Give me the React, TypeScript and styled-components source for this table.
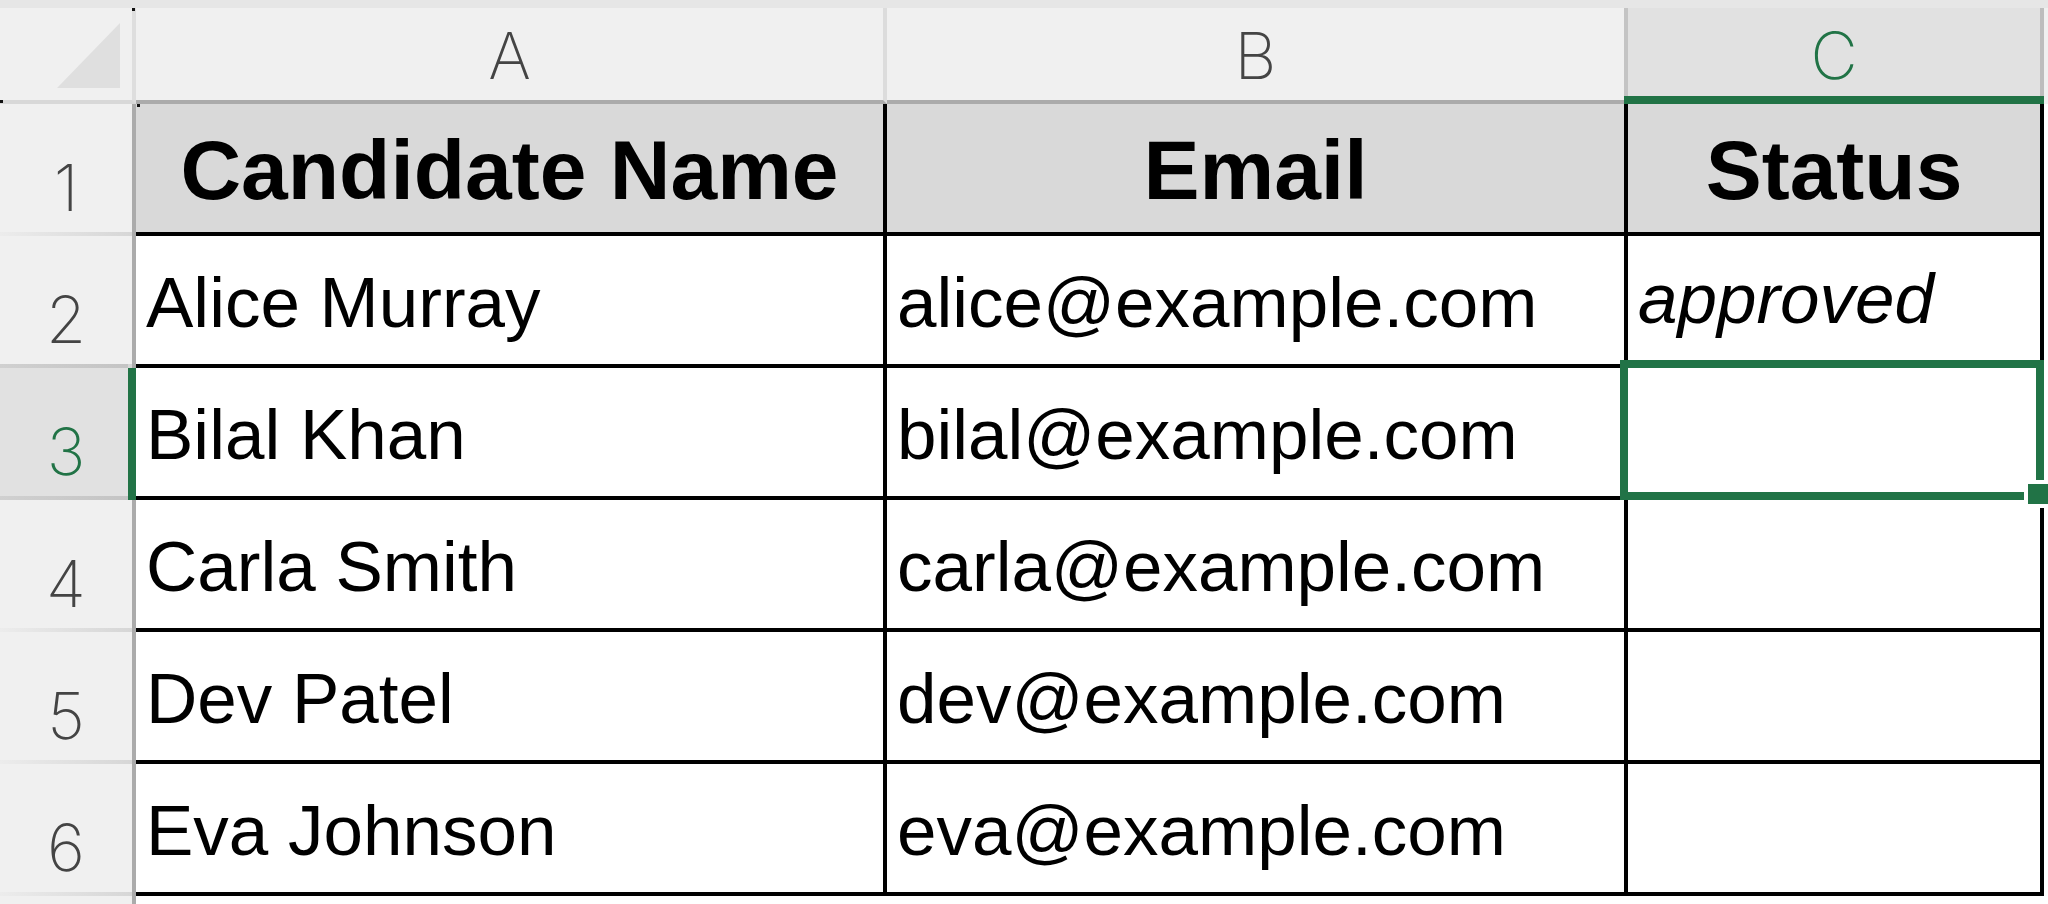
import React from "react";
import styled, { createGlobalStyle, css } from "styled-components";

const GREEN = "#217346";

const GlobalStyle = createGlobalStyle`
  html, body {
    margin: 0;
    padding: 0;
    overflow: hidden;
    background: #ffffff;
  }
  body {
    font-family: "Liberation Sans", Arial, sans-serif;
  }
`;

const Page = styled.div`
  width: 2048px;
  height: 904px;
  overflow: hidden;
  background: #ffffff;
`;

const TopStrip = styled.div`
  height: 8px;
  background: #e6e6e6;
`;

const Sheet = styled.div`
  position: relative;
  display: grid;
  grid-template-columns: 136px 751px 741px 416px 4px;
  grid-template-rows: 96px repeat(6, 132px) 8px;
`;

const Corner = styled.div`
  box-sizing: border-box;
  background: #f0f0f0;
  border-right: 4px solid #dedede;
  border-bottom: 4px solid #d8d8d8;
  display: flex;
  justify-content: flex-end;
  align-items: flex-end;
  padding: 0 12px 12px 0;
`;

const CornerTriangle = styled.div`
  width: 63px;
  height: 65px;
  background: #dfdfdf;
  clip-path: polygon(100% 0, 100% 100%, 0 100%);
`;

const headingFont = css`
  font-family: "Segoe UI", Inter, "Noto Sans", sans-serif;
  font-weight: 200;
  font-size: 65px;
  line-height: 1;
`;

const ColHead = styled.div<{ $selected?: boolean; $sep?: string }>`
  position: relative;
  box-sizing: border-box;
  background: ${(p) => (p.$selected ? "#e1e1e1" : "#f0f0f0")};
  border-right: 4px solid ${(p) => p.$sep ?? "#dcdcdc"};
  border-bottom: 4px solid #ababab;
  display: flex;
  justify-content: center;
  align-items: flex-end;
  padding-bottom: 12px;
  color: ${(p) => (p.$selected ? GREEN : "#444444")};
  ${headingFont};
  ${(p) =>
    p.$selected &&
    css`
      &::after {
        content: "";
        position: absolute;
        left: -4px;
        right: -4px;
        bottom: -4px;
        height: 8px;
        background: ${GREEN};
      }
    `}
`;

const RowHead = styled.div<{ $selected?: boolean }>`
  position: relative;
  box-sizing: border-box;
  background: ${(p) => (p.$selected ? "#e1e1e1" : "#f0f0f0")};
  border-right: ${(p) => (p.$selected ? `8px solid ${GREEN}` : "4px solid #ababab")};
  display: flex;
  justify-content: center;
  align-items: flex-end;
  padding-bottom: 16px;
  padding-left: ${(p) => (p.$selected ? "4px" : "0")};
  color: ${(p) => (p.$selected ? GREEN : "#444444")};
  ${headingFont};
  &::after {
    content: "";
    position: absolute;
    left: 0;
    right: 0;
    bottom: 0;
    height: 4px;
    background: ${(p) =>
      p.$selected
        ? "linear-gradient(to right, #d0d0d0, #c4c4c4)"
        : "linear-gradient(to right, #ececec, #d6d6d6)"};
  }
  ${(p) =>
    p.$selected &&
    css`
      &::before {
        content: "";
        position: absolute;
        left: 0;
        right: 0;
        top: -4px;
        height: 4px;
        background: linear-gradient(to right, #d0d0d0, #c4c4c4);
      }
    `}
`;

const TailHead = styled.div`
  box-sizing: border-box;
  background: #f0f0f0;
  border-right: 4px solid #ababab;
`;

const Cell = styled.div<{
  $head?: boolean;
  $italic?: boolean;
  $lift?: number;
  $selected?: boolean;
}>`
  position: relative;
  box-sizing: border-box;
  background: ${(p) => (p.$head ? "#d9d9d9" : "#ffffff")};
  border-right: 4px solid #000000;
  border-bottom: 4px solid #000000;
  display: flex;
  align-items: flex-end;
  justify-content: ${(p) => (p.$head ? "center" : "flex-start")};
  padding-left: ${(p) => (p.$head ? "0" : "10px")};
  padding-bottom: ${(p) => (p.$head ? 20 : 26 + (p.$lift ?? 0))}px;
  font-family: "Liberation Sans", Arial, sans-serif;
  font-size: ${(p) => (p.$head ? "84px" : "71px")};
  font-weight: ${(p) => (p.$head ? 700 : 400)};
  font-style: ${(p) => (p.$italic ? "italic" : "normal")};
  line-height: 1;
  color: #000000;
  white-space: nowrap;
  ${(p) =>
    p.$selected &&
    css`
      &::after {
        content: "";
        position: absolute;
        top: -8px;
        left: -8px;
        right: -4px;
        bottom: -4px;
        border: 8px solid ${GREEN};
        z-index: 2;
      }
    `}
`;

const FillHandle = styled.span`
  position: absolute;
  right: -8px;
  bottom: -8px;
  width: 20px;
  height: 20px;
  background: ${GREEN};
  box-shadow: 0 0 0 4px #ffffff;
  z-index: 3;
`;

const BlankCell = styled.div<{ $shade?: boolean }>`
  background: ${(p) => (p.$shade ? "#f0f0f0" : "#ffffff")};
`;

const Dot = styled.span<{ $x: number; $y: number }>`
  position: absolute;
  left: ${(p) => p.$x}px;
  top: ${(p) => p.$y}px;
  width: 3px;
  height: 3px;
  background: #111111;
  z-index: 4;
`;

type Row = { name: string; email: string; status?: string };

const rows: Row[] = [
  { name: "Alice Murray", email: "alice@example.com", status: "approved" },
  { name: "Bilal Khan", email: "bilal@example.com" },
  { name: "Carla Smith", email: "carla@example.com" },
  { name: "Dev Patel", email: "dev@example.com" },
  { name: "Eva Johnson", email: "eva@example.com" },
];

export default function App() {
  return (
    <>
      <GlobalStyle />
      <Page>
        <TopStrip />
        <Sheet>
          <Corner>
            <CornerTriangle />
          </Corner>
          <ColHead $sep="#dcdcdc">A</ColHead>
          <ColHead $sep="#c4c4c4">B</ColHead>
          <ColHead $selected $sep="#bdbdbd">C</ColHead>
          <BlankCell $shade />

          <RowHead>1</RowHead>
          <Cell $head>Candidate Name</Cell>
          <Cell $head>Email</Cell>
          <Cell $head>Status</Cell>
          <BlankCell />

          {rows.map((r, i) => {
            const n = i + 2;
            const sel = n === 3;
            return (
              <React.Fragment key={r.email}>
                <RowHead $selected={sel}>{n}</RowHead>
                <Cell>{r.name}</Cell>
                <Cell>{r.email}</Cell>
                <Cell $italic={!!r.status} $lift={r.status ? 4 : 0} $selected={sel}>
                  {r.status ?? ""}
                  {sel && <FillHandle />}
                </Cell>
                <BlankCell />
              </React.Fragment>
            );
          })}

          <TailHead />
          <BlankCell />
          <BlankCell />
          <BlankCell />
          <BlankCell />

          <Dot $x={132} $y={0} />
          <Dot $x={0} $y={92} />
          <Dot $x={137} $y={96} />
        </Sheet>
      </Page>
    </>
  );
}
